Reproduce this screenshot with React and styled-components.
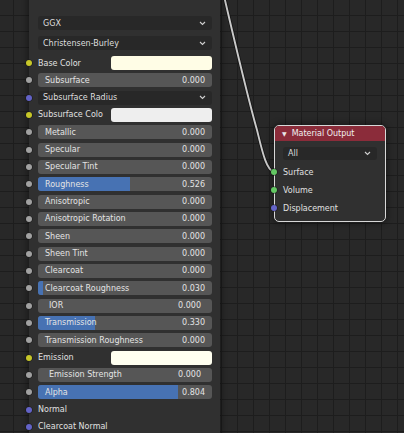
import React from 'react';
import styled, { createGlobalStyle } from 'styled-components';

const GlobalStyle = createGlobalStyle`
  html, body {
    margin: 0;
    padding: 0;
    background: #282828;
    overflow: hidden;
  }
  * { box-sizing: border-box; }
`;

const SOCKET = {
  color: '#c7c729',
  float: '#a1a1a1',
  vector: '#6363c7',
  shader: '#63c763',
};

const Canvas = styled.div`
  position: relative;
  width: 404px;
  height: 433px;
  overflow: hidden;
  background-color: #282828;
  background-image:
    linear-gradient(#1d1d1d 1px, transparent 1px),
    linear-gradient(90deg, #1d1d1d 1px, transparent 1px);
  background-size: 16px 16px;
  background-position: 13px 15px;
  font-family: "DejaVu Sans", "Liberation Sans", sans-serif;
  font-size: 8px;
  color: #e2e2e2;
`;

const Wire = styled.svg`
  position: absolute;
  left: 0;
  top: 0;
  pointer-events: none;
`;

const Node = styled.div`
  position: absolute;
  left: ${(p) => p.x}px;
  top: ${(p) => p.y}px;
  width: ${(p) => p.w}px;
  background: #303030;
  border-radius: 5px;
  box-shadow: 0 0 6px 1px rgba(0, 0, 0, 0.45);
  border: ${(p) => (p.active ? '1px solid #d8d8d8' : 'none')};
`;

const Body = styled.div`
  display: flex;
  flex-direction: column;
  padding: ${(p) => p.pad};
`;

const Header = styled.div`
  display: flex;
  align-items: center;
  gap: 5px;
  height: 15px;
  padding-left: 7px;
  background: #8b2c3a;
  border-radius: 4px 4px 0 0;
  color: #f0f0f0;
  font-size: 8px;
`;

const Triangle = styled.span`
  font-size: 6px;
  color: #e8e8e8;
`;

const Row = styled.div`
  position: relative;
  display: flex;
  align-items: center;
  height: ${(p) => p.h || 14}px;
  margin-bottom: ${(p) => p.mb ?? 3.33}px;
`;

const Socket = styled.span`
  position: absolute;
  left: ${(p) => p.offset}px;
  top: 50%;
  width: 6px;
  height: 6px;
  margin-top: -3px;
  border-radius: 50%;
  background: ${(p) => p.color};
  box-shadow: 0 0 0 0.6px #1a1a1a;
`;

const Select = styled.div`
  flex: 1;
  height: 100%;
  display: flex;
  align-items: center;
  justify-content: space-between;
  padding: 0 6px 0 5px;
  background: #282828;
  border-radius: 3px;
  color: #dedede;
`;

const Label = styled.span`
  white-space: nowrap;
  color: #e0e0e0;
`;

const Swatch = styled.div`
  width: 101px;
  height: 100%;
  margin-left: auto;
  border-radius: 3px;
  background: ${(p) => p.color};
`;

const Field = styled.div`
  position: relative;
  flex: 1;
  height: 100%;
  display: flex;
  align-items: center;
  justify-content: space-between;
  padding: 0 ${(p) => (p.inset ? 11 : 7)}px;
  background: #565656;
  border-radius: 3px;
  overflow: hidden;
  color: #e4e4e4;
`;

const Fill = styled.div`
  position: absolute;
  left: 0;
  top: 0;
  bottom: 0;
  background: #4772b3;
`;

const FieldText = styled.span`
  position: relative;
  white-space: nowrap;
`;

const Chevron = () => (
  <svg width="7" height="5" viewBox="0 0 7 5">
    <polyline points="1,1 3.5,3.5 6,1" fill="none" stroke="#d0d0d0" strokeWidth="1.1" />
  </svg>
);

const Dropdown = ({ label, mb, h }) => (
  <Row mb={mb} h={h}>
    <Select>
      <span>{label}</span>
      <Chevron />
    </Select>
  </Row>
);

const ColorInput = ({ label, color, offset }) => (
  <Row>
    <Socket color={SOCKET.color} offset={offset} />
    <Label>{label}</Label>
    <Swatch color={color} />
  </Row>
);

const Slider = ({ label, value, fill = 0, inset, offset }) => (
  <Row>
    <Socket color={SOCKET.float} offset={offset} />
    <Field inset={inset}>
      {fill > 0 && <Fill style={{ width: `${fill * 100}%` }} />}
      <FieldText>{label}</FieldText>
      <FieldText>{value}</FieldText>
    </Field>
  </Row>
);

const SocketOnly = ({ label, color, offset, mb }) => (
  <Row mb={mb}>
    <Socket color={color} offset={offset} />
    <Label>{label}</Label>
  </Row>
);

const SubsurfaceRadius = ({ offset }) => (
  <Row>
    <Socket color={SOCKET.vector} offset={offset} />
    <Select>
      <span>Subsurface Radius</span>
      <Chevron />
    </Select>
  </Row>
);

const sliders = [
  ['Metallic', '0.000'],
  ['Specular', '0.000'],
  ['Specular Tint', '0.000'],
  ['Roughness', '0.526', 0.526],
  ['Anisotropic', '0.000'],
  ['Anisotropic Rotation', '0.000'],
  ['Sheen', '0.000'],
  ['Sheen Tint', '0.000'],
  ['Clearcoat', '0.000'],
  ['Clearcoat Roughness', '0.030', 0.03],
];

const PrincipledNode = () => {
  const off = -12;
  return (
    <Node x={29} y={-12} w={191}>
      <Body pad="28px 8px 4px 9px">
        <Dropdown label="GGX" mb={6} />
        <Dropdown label="Christensen-Burley" mb={6} />
        <ColorInput label="Base Color" color="#fffde6" offset={off} />
        <Slider label="Subsurface" value="0.000" offset={off} />
        <SubsurfaceRadius offset={off} />
        <ColorInput label="Subsurface Colo" color="#eeeeee" offset={off} />
        {sliders.map(([l, v, f]) => (
          <Slider key={l} label={l} value={v} fill={f} offset={off} />
        ))}
        <Slider label="IOR" value="0.000" inset offset={off} />
        <Slider label="Transmission" value="0.330" fill={0.33} offset={off} />
        <Slider label="Transmission Roughness" value="0.000" offset={off} />
        <ColorInput label="Emission" color="#fffff0" offset={off} />
        <Slider label="Emission Strength" value="0.000" inset offset={off} />
        <Slider label="Alpha" value="0.804" fill={0.804} offset={off} />
        <SocketOnly label="Normal" color={SOCKET.vector} offset={off} />
        <SocketOnly label="Clearcoat Normal" color={SOCKET.vector} offset={off} mb={0} />
      </Body>
    </Node>
  );
};

const OutputNode = () => {
  const off = -12;
  return (
    <Node x={274} y={125} w={112} active>
      <Header>
        <Triangle>▼</Triangle>
        <span>Material Output</span>
      </Header>
      <Body pad="6px 8px 6px 8px">
        <Dropdown label="All" h={13} mb={5} />
        <SocketOnly label="Surface" color={SOCKET.shader} offset={off} mb={4} />
        <SocketOnly label="Volume" color={SOCKET.shader} offset={off} mb={4} />
        <SocketOnly label="Displacement" color={SOCKET.vector} offset={off} mb={0} />
      </Body>
    </Node>
  );
};

export default function App() {
  const d = 'M 224 -4 C 232 30, 247 95, 257 130 C 262 150, 266 170, 274 172';
  return (
    <>
      <GlobalStyle />
      <Canvas>
        <Wire width="404" height="433">
          <path d={d} fill="none" stroke="#161616" strokeWidth="3.6" />
          <path d={d} fill="none" stroke="#cacaca" strokeWidth="1.9" />
        </Wire>
        <PrincipledNode />
        <OutputNode />
      </Canvas>
    </>
  );
}
